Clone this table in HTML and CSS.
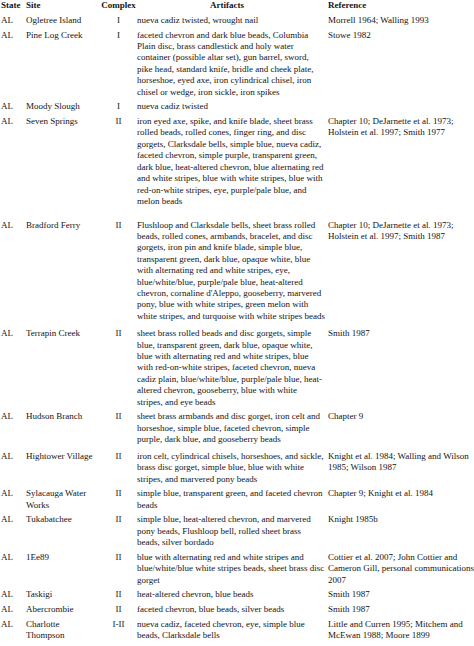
FILE: index.html
```html
<!DOCTYPE html>
<html>
<head>
<meta charset="utf-8">
<link rel="stylesheet" href="styles.css">
</head>
<body>
<table class="sites">
  <colgroup>
    <col class="c-state">
    <col class="c-site">
    <col class="c-complex">
    <col class="c-art">
    <col class="c-ref">
  </colgroup>
  <thead>
    <tr>
      <th class="state">State</th>
      <th class="site">Site</th>
      <th class="complex">Complex</th>
      <th class="art art-head">Artifacts</th>
      <th class="ref">Reference</th>
    </tr>
  </thead>
  <tbody>
    <tr>
      <td class="state">AL</td>
      <td class="site">Ogletree Island</td>
      <td class="complex">I</td>
      <td class="art">nueva cadiz twisted, wrought nail</td>
      <td class="ref">Morrell 1964; Walling 1993</td>
    </tr>
    <tr>
      <td class="state">AL</td>
      <td class="site">Pine Log Creek</td>
      <td class="complex">I</td>
      <td class="art">faceted chevron and dark blue beads, Columbia<br>Plain disc, brass candlestick and holy water<br>container (possible altar set), gun barrel, sword,<br>pike head, standard knife, bridle and cheek plate,<br>horseshoe, eyed axe, iron cylindrical chisel, iron<br>chisel or wedge, iron sickle, iron spikes</td>
      <td class="ref">Stowe 1982</td>
    </tr>
    <tr>
      <td class="state">AL</td>
      <td class="site">Moody Slough</td>
      <td class="complex">I</td>
      <td class="art">nueva cadiz twisted</td>
      <td class="ref"></td>
    </tr>
    <tr class="gap-lg">
      <td class="state">AL</td>
      <td class="site">Seven Springs</td>
      <td class="complex">II</td>
      <td class="art">iron eyed axe, spike, and knife blade, sheet brass<br>rolled beads, rolled cones, finger ring, and disc<br>gorgets, Clarksdale bells, simple blue, nueva cadiz,<br>faceted chevron, simple purple, transparent green,<br>dark blue, heat-altered chevron, blue alternating red<br>and white stripes, blue with white stripes, blue with<br>red-on-white stripes, eye, purple/pale blue, and<br>melon beads</td>
      <td class="ref">Chapter 10; DeJarnette et al. 1973;<br>Holstein et al. 1997; Smith 1977</td>
    </tr>
    <tr class="gap-sm">
      <td class="state">AL</td>
      <td class="site">Bradford Ferry</td>
      <td class="complex">II</td>
      <td class="art">Flushloop and Clarksdale bells, sheet brass rolled<br>beads, rolled cones, armbands, bracelet, and disc<br>gorgets, iron pin and knife blade, simple blue,<br>transparent green, dark blue, opaque white, blue<br>with alternating red and white stripes, eye,<br>blue/white/blue, purple/pale blue, heat-altered<br>chevron, cornaline d'Aleppo, gooseberry, marvered<br>pony, blue with white stripes, green melon with<br>white stripes, and turquoise with white stripes beads</td>
      <td class="ref">Chapter 10; DeJarnette et al. 1973;<br>Holstein et al. 1997; Smith 1987</td>
    </tr>
    <tr>
      <td class="state">AL</td>
      <td class="site">Terrapin Creek</td>
      <td class="complex">II</td>
      <td class="art">sheet brass rolled beads and disc gorgets, simple<br>blue, transparent green, dark blue, opaque white,<br>blue with alternating red and white stripes, blue<br>with red-on-white stripes, faceted chevron, nueva<br>cadiz plain, blue/white/blue, purple/pale blue, heat-<br>altered chevron, gooseberry, blue with white<br>stripes, and eye beads</td>
      <td class="ref">Smith 1987</td>
    </tr>
    <tr class="gap-xs">
      <td class="state">AL</td>
      <td class="site">Hudson Branch</td>
      <td class="complex">II</td>
      <td class="art">sheet brass armbands and disc gorget, iron celt and<br>horseshoe, simple blue, faceted chevron, simple<br>purple, dark blue, and gooseberry beads</td>
      <td class="ref">Chapter 9</td>
    </tr>
    <tr>
      <td class="state">AL</td>
      <td class="site">Hightower Village</td>
      <td class="complex">II</td>
      <td class="art">iron celt, cylindrical chisels, horseshoes, and sickle,<br>brass disc gorget, simple blue, blue with white<br>stripes, and marvered pony beads</td>
      <td class="ref">Knight et al. 1984; Walling and Wilson<br>1985; Wilson 1987</td>
    </tr>
    <tr>
      <td class="state">AL</td>
      <td class="site">Sylacauga Water<br>Works</td>
      <td class="complex">II</td>
      <td class="art">simple blue, transparent green, and faceted chevron<br>beads</td>
      <td class="ref">Chapter 9; Knight et al. 1984</td>
    </tr>
    <tr>
      <td class="state">AL</td>
      <td class="site">Tukabatchee</td>
      <td class="complex">II</td>
      <td class="art">simple blue, heat-altered chevron, and marvered<br>pony beads, Flushloop bell, rolled sheet brass<br>beads, silver bordado</td>
      <td class="ref">Knight 1985b</td>
    </tr>
    <tr>
      <td class="state">AL</td>
      <td class="site">1Ee89</td>
      <td class="complex">II</td>
      <td class="art">blue with alternating red and white stripes and<br>blue/white/blue white stripes beads, sheet brass disc<br>gorget</td>
      <td class="ref">Cottier et al. 2007; John Cottier and<br>Cameron Gill, personal communications<br>2007</td>
    </tr>
    <tr>
      <td class="state">AL</td>
      <td class="site">Taskigi</td>
      <td class="complex">II</td>
      <td class="art">heat-altered chevron, blue beads</td>
      <td class="ref">Smith 1987</td>
    </tr>
    <tr>
      <td class="state">AL</td>
      <td class="site">Abercrombie</td>
      <td class="complex">II</td>
      <td class="art">faceted chevron, blue beads, silver beads</td>
      <td class="ref">Smith 1987</td>
    </tr>
    <tr>
      <td class="state">AL</td>
      <td class="site">Charlotte<br>Thompson</td>
      <td class="complex">I-II</td>
      <td class="art">nueva cadiz, faceted chevron, eye, simple blue<br>beads, Clarksdale bells</td>
      <td class="ref">Little and Curren 1995; Mitchem and<br>McEwan 1988; Moore 1899</td>
    </tr>
  </tbody>
</table>
</body>
</html>
```

FILE: styles.css
```css
html, body {
  margin: 0;
  padding: 0;
  background: #ffffff;
}

body {
  font-family: "Liberation Serif", "Times New Roman", serif;
  font-size: 9px;
  line-height: 11.4px;
  color: #141414;
}

.sites {
  table-layout: fixed;
  border-collapse: collapse;
  border-spacing: 0;
  width: 474px;
}

.c-state { width: 26px; }
.c-site { width: 74px; }
.c-complex { width: 37px; }
.c-art { width: 191px; }
.c-ref { width: 146px; }

.sites th,
.sites td {
  padding: 1.6px 0 1.7px;
  vertical-align: top;
  text-align: left;
  white-space: nowrap;
  overflow: visible;
}

.sites th {
  font-weight: bold;
  padding-top: 0.3px;
}

.sites td.state,
.sites th.state {
  padding-left: 1px;
}

.sites .complex {
  text-align: center;
}

.sites .art {
  padding-right: 11px;
}

.sites th.art-head {
  text-align: center;
}

.sites tr.gap-lg td {
  padding-bottom: 10.6px;
}

.sites tr.gap-sm td {
  padding-bottom: 4.5px;
}

.sites tr.gap-xs td {
  padding-bottom: 3.6px;
}
```
